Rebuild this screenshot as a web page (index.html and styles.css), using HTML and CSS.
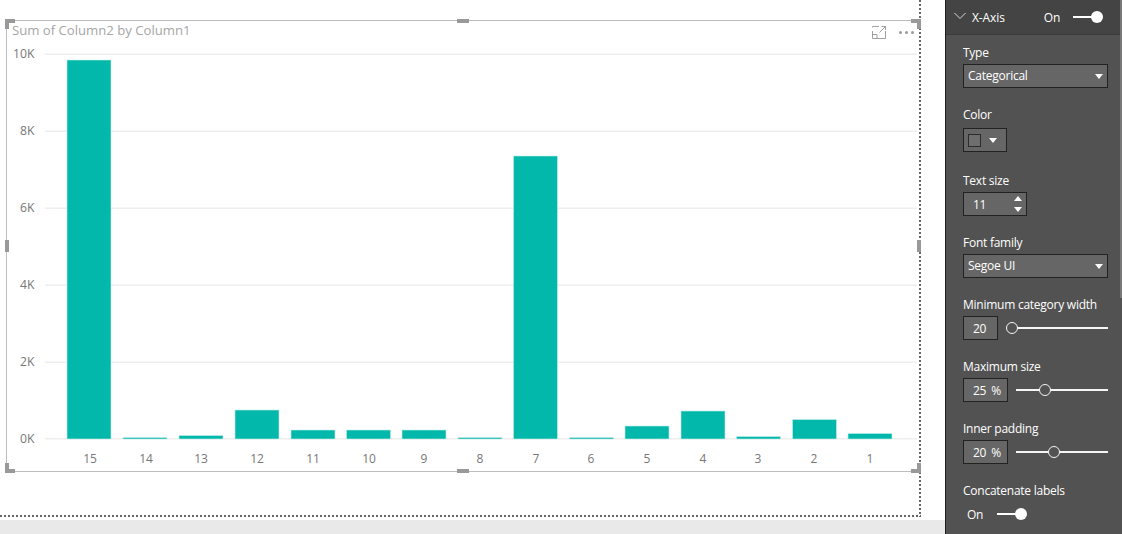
FILE: index.html
```html
<!DOCTYPE html>
<html lang="en">
<head>
<meta charset="utf-8">
<title>X-Axis</title>
<link rel="stylesheet" href="styles.css">
</head>
<body>
<div class="app">
  <main class="workspace">
    <div class="page">
      <section class="visual">
        <header class="visual-head">
          <h2 class="visual-title">Sum of Column2 by Column1</h2>
          <div class="visual-tools">
            <svg class="focus-icon" width="16" height="14" viewBox="0 0 16 14"><path d="M1.5 6V13.5H14.5V6M1.5 2.5V1.5H8M1.5 9.5H6V13.5M8.5 7.5L14.5 1.5M10.5 1.5H14.5V5" fill="none" stroke="#a0a0a0"/></svg>
            <span class="dots"><i></i><i></i><i></i></span>
          </div>
        </header>
        <svg class="chart" width="912" height="428" viewBox="7 43 912 428">
          <g class="grid">
            <rect x="45" y="53.5" width="872" height="1.5"/>
            <rect x="45" y="130.5" width="872" height="1.5"/>
            <rect x="45" y="207.5" width="872" height="1.5"/>
            <rect x="45" y="284.5" width="872" height="1.5"/>
            <rect x="45" y="361.5" width="872" height="1.5"/>
            <rect x="45" y="438" width="872" height="1.5"/>
          </g>
          <g class="y-labels">
            <text x="34.5" y="57.5">10K</text>
            <text x="34.5" y="134.5">8K</text>
            <text x="34.5" y="211.5">6K</text>
            <text x="34.5" y="288.5">4K</text>
            <text x="34.5" y="365.5">2K</text>
            <text x="34.5" y="442.5">0K</text>
          </g>
          <g class="bars">
            <rect x="67" y="60" width="44" height="379"/>
            <rect x="123" y="437.5" width="44" height="1.5"/>
            <rect x="179" y="435.5" width="44" height="3.5"/>
            <rect x="235" y="410" width="44" height="29"/>
            <rect x="291" y="430" width="44" height="9"/>
            <rect x="346.5" y="430" width="44" height="9"/>
            <rect x="402" y="430" width="44" height="9"/>
            <rect x="458" y="437.5" width="44" height="1.5"/>
            <rect x="513.5" y="156" width="44" height="283"/>
            <rect x="569.5" y="437.5" width="44" height="1.5"/>
            <rect x="625" y="426" width="44" height="13"/>
            <rect x="681" y="411" width="44" height="28"/>
            <rect x="736.5" y="436.5" width="44" height="2.5"/>
            <rect x="792.5" y="419.5" width="44" height="19.5"/>
            <rect x="848" y="433.5" width="44" height="5.5"/>
          </g>
          <g class="x-labels">
            <text x="90" y="462.5">15</text>
            <text x="146" y="462.5">14</text>
            <text x="201" y="462.5">13</text>
            <text x="257" y="462.5">12</text>
            <text x="313" y="462.5">11</text>
            <text x="369" y="462.5">10</text>
            <text x="424" y="462.5">9</text>
            <text x="480" y="462.5">8</text>
            <text x="536" y="462.5">7</text>
            <text x="591" y="462.5">6</text>
            <text x="647" y="462.5">5</text>
            <text x="703" y="462.5">4</text>
            <text x="758" y="462.5">3</text>
            <text x="814" y="462.5">2</text>
            <text x="870" y="462.5">1</text>
          </g>
        </svg>
        <span class="handle corner tl"></span>
        <span class="handle corner tr"></span>
        <span class="handle corner bl"></span>
        <span class="handle corner br"></span>
        <span class="handle edge-h top"></span>
        <span class="handle edge-h bottom"></span>
        <span class="handle edge-v left"></span>
        <span class="handle edge-v right"></span>
      </section>
    </div>
    <div class="page-footer"></div>
  </main>
  <aside class="panel">
    <header class="panel-head">
      <svg class="chevron" width="12" height="8" viewBox="0 0 12 8"><path d="M0.5 1L6 6.5L11.5 1" fill="none" stroke="#d8d8d8" stroke-width="1"/></svg>
      <span class="panel-title">X-Axis</span>
      <span class="toggle-label head-on">On</span>
      <span class="toggle"><i class="toggle-line"></i><i class="toggle-knob"></i></span>
    </header>
    <div class="panel-body">
      <div class="field">
        <label class="field-label">Type</label>
        <div class="box select"><span>Categorical</span><i class="caret"></i></div>
      </div>
      <div class="field field-color">
        <label class="field-label">Color</label>
        <div class="box color-box"><i class="swatch"></i><i class="caret"></i></div>
      </div>
      <div class="field">
        <label class="field-label">Text size</label>
        <div class="box spinner"><span>11</span><span class="spin-arrows"><i class="spin-up"></i><i class="caret"></i></span></div>
      </div>
      <div class="field">
        <label class="field-label">Font family</label>
        <div class="box select"><span>Segoe UI</span><i class="caret"></i></div>
      </div>
      <div class="field">
        <label class="field-label">Minimum category width</label>
        <div class="slider-row">
          <div class="box value value-plain"><span>20</span></div>
          <div class="slider"><i class="knob" style="left:0px"></i></div>
        </div>
      </div>
      <div class="field">
        <label class="field-label">Maximum size</label>
        <div class="slider-row">
          <div class="box value value-pct"><span>25</span><span>%</span></div>
          <div class="slider"><i class="knob" style="left:23px"></i></div>
        </div>
      </div>
      <div class="field">
        <label class="field-label">Inner padding</label>
        <div class="slider-row">
          <div class="box value value-pct"><span>20</span><span>%</span></div>
          <div class="slider"><i class="knob" style="left:32px"></i></div>
        </div>
      </div>
      <div class="field field-last">
        <label class="field-label">Concatenate labels</label>
        <div class="toggle-row">
          <span class="toggle-label">On</span>
          <span class="toggle"><i class="toggle-line"></i><i class="toggle-knob"></i></span>
        </div>
      </div>
    </div>
    <div class="scroll-thumb"></div>
  </aside>
</div>
</body>
</html>
```

FILE: styles.css
```css
* { box-sizing: border-box; }
html, body { margin: 0; padding: 0; height: 100%; }
body { background: #fff; font-family: "Open Sans", "Noto Sans", sans-serif; overflow: hidden; }
i { display: block; }

.app { display: flex; width: 1122px; height: 534px; }

/* Canvas */
.workspace { width: 945px; display: flex; flex-direction: column; background: #fff; }
.page {
  width: 921px;
  height: 517px;
  padding: 19px 0 0 5px;
  overflow: hidden;
  position: relative;
  background-image:
    repeating-linear-gradient(to bottom, #666 0 2px, transparent 2px 4px),
    repeating-linear-gradient(to right, #666 0 2px, transparent 2px 4px);
  background-size: 2px 100%, 100% 2px;
  background-position: right top, left bottom;
  background-repeat: no-repeat;
}
.page-footer { margin-top: 3px; flex: 1; background: #e9e9e9; }

.visual {
  position: relative;
  width: 914px;
  height: 454px;
  padding: 1px;
}
.visual::before {
  content: "";
  position: absolute;
  left: 1px; top: 1px; right: 0; bottom: 1px;
  border: 1px solid #bdbdbd;
  border-right: 0;
}
.visual-head {
  position: relative;
  display: flex;
  align-items: center;
  justify-content: space-between;
  height: 20px;
  margin-left: 6px;
  margin-bottom: 3px;
}
.visual-title { margin: 0; font-size: 13.2px; font-weight: 400; color: #a6a6a6; letter-spacing: -0.03px; }
.visual-tools { display: flex; align-items: center; gap: 12px; padding-right: 4px; padding-top: 4px; }
.focus-icon { display: block; }
.dots { display: flex; gap: 3px; }
.dots i { width: 3px; height: 3px; background: #9a9a9a; border-radius: 50%; }

.chart { display: block; position: relative; margin-left: 1px; }
.grid rect { fill: #eeeeee; }
.bars rect { fill: #01b8aa; stroke: #c8efeb; stroke-width: 0.6; }
.y-labels text { font-size: 12.2px; fill: #777; text-anchor: end; }
.x-labels text { font-size: 12px; fill: #777; text-anchor: middle; }

.handle { position: absolute; background: #999; }
.corner { width: 10px; height: 10px; background: none; }
.corner::before, .corner::after { content: ""; position: absolute; background: #999; }
.corner::before { width: 10px; height: 4px; }
.corner::after { width: 4px; height: 10px; }
.tl { left: 0; top: 0; }
.tr { left: 906px; top: 0; }
.tr::after { left: 6px; }
.bl { left: 0; top: 444px; }
.bl::before { top: 6px; }
.br { left: 906px; top: 444px; }
.br::before { top: 6px; }
.br::after { left: 6px; }
.edge-h { width: 12px; height: 4px; left: 452px; }
.top { top: 0; }
.bottom { top: 450px; }
.edge-v { width: 4px; height: 12px; top: 221px; }
.left { left: 0; }
.right { left: 912px; }

/* Format panel */
.panel {
  position: relative;
  width: 177px;
  background: #525252;
  border-left: 1px solid #1f1f1f;
  color: #fff;
  font-size: 12px;
  letter-spacing: -0.25px;
  overflow: hidden;
}
.panel-head {
  height: 35px;
  background: #444;
  border-bottom: 1px solid #3a3a3a;
  display: flex;
  align-items: center;
  position: relative;
}
.chevron { margin-left: 8px; margin-top: -3px; display: block; }
.panel-title { margin-left: 6px; letter-spacing: -0.1px; }
.head-on { margin-left: 39px; }
.panel-head .toggle { margin-left: 13px; }
.toggle { display: flex; align-items: center; width: 30px; }
.toggle-line { width: 20px; height: 2px; background: #fff; }
.toggle-knob { width: 12px; height: 12px; border-radius: 50%; background: #fff; margin-left: -2px; }

.panel-body { padding: 10px 14px 0 17px; }
.field { margin-bottom: 19px; }
.field-label { display: block; height: 16px; line-height: 16px; margin-bottom: 3px; white-space: nowrap; }
.field-color { margin-bottom: 21px; }
.field-color .field-label { margin-bottom: 5px; }
.field-last { margin-bottom: 0; }

.box {
  height: 24px;
  border: 1px solid #222;
  background: #666;
  display: flex;
  align-items: center;
  color: #fff;
}
.select { justify-content: space-between; padding: 0 4px 1px 4px; }
.caret { width: 0; height: 0; border-left: 4px solid transparent; border-right: 4px solid transparent; border-top: 5px solid #fff; }
.select .caret { margin-top: 1px; }
.color-box { width: 44px; padding-left: 4px; gap: 8px; }
.swatch { width: 13px; height: 13px; background: #6e6e6e; border: 1px solid #2b2b2b; }
.spinner { width: 64px; justify-content: space-between; padding: 0 4px 0 9px; }
.spin-arrows { display: flex; flex-direction: column; gap: 6px; }
.spin-up { width: 0; height: 0; border-left: 4px solid transparent; border-right: 4px solid transparent; border-bottom: 5px solid #fff; }

.slider-row { display: flex; align-items: center; }
.value { justify-content: space-between; padding: 0 6px 0 9px; }
.value-plain { width: 35px; }
.value-pct { width: 45px; }
.slider { position: relative; flex: 1; height: 1.5px; margin-left: 8px; background: #f5f5f5; }
.knob {
  position: absolute;
  top: -5px;
  width: 12px;
  height: 12px;
  border-radius: 50%;
  border: 1.5px solid #f5f5f5;
  background: #525252;
}
.toggle-row { display: flex; align-items: center; height: 24px; padding-left: 4px; }
.toggle-row .toggle { margin-left: 14px; }
.scroll-thumb { position: absolute; top: 0; right: 0; width: 2px; height: 298px; background: #787878; }
```
